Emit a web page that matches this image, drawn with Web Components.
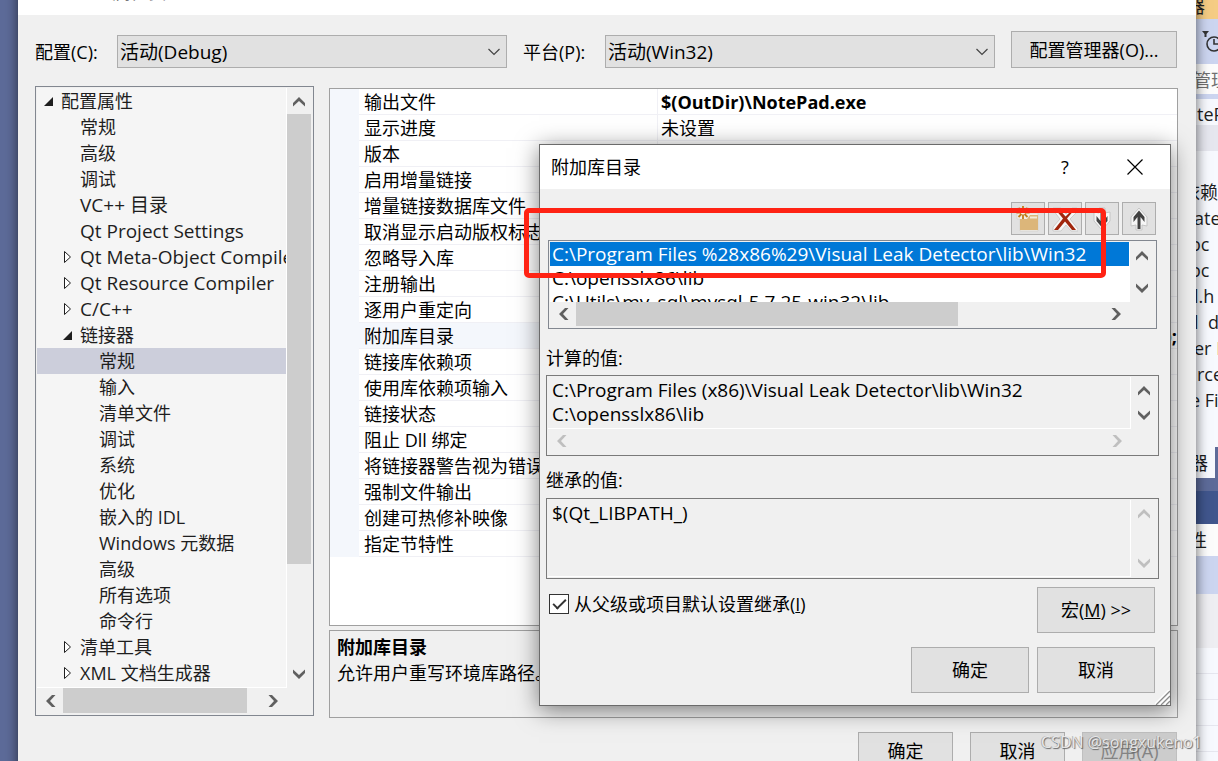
<!DOCTYPE html>
<html lang="zh-CN">
<head>
<meta charset="utf-8">
<title>NotePad 属性页</title>
<style>
html, body { margin: 0; height: 100%; }
body { overflow: hidden; background: #5d6b99; color: #000; font: 18px/26px "Open Sans", "Noto Sans CJK SC", sans-serif; }
</style>
</head>
<body>
<app-shell></app-shell>
<script>
const define = (name, html, setup) => {
  const tpl = document.createElement('template');
  tpl.innerHTML = html;
  customElements.define(name, class extends HTMLElement {
    constructor() {
      super();
      this.attachShadow({ mode: 'open' }).append(tpl.content.cloneNode(true));
    }
    connectedCallback() {
      if (setup && !this.ready) { this.ready = true; setup(this, this.shadowRoot); }
    }
  });
};

/* Bold chevron used by scroll bars; dir = up | down | left | right */
define('chevron-icon', `
<style>
:host { display: flex; width: 12px; height: 12px; flex: none; color: #606060; }
:host([dir=down]) svg { transform: rotate(180deg); }
:host([dir=left]) svg { transform: rotate(-90deg); }
:host([dir=right]) svg { transform: rotate(90deg); }
</style>
<svg width="12" height="12" viewBox="0 0 12 12"><path d="M0 8 6 2l6 6v3.500L6 6l-6 5.500z" fill="currentColor"/></svg>`);

define('scroll-bar', `
<style>
:host { display: flex; flex-direction: column; width: 24px; background: #f0f0f0; }
:host([horizontal]) { flex-direction: row; width: auto; height: 24px; }
:host([off]) chevron-icon { color: #bfbfbf; }
.end { flex: 0 0 26px; display: flex; align-items: center; justify-content: center; }
.thumb { background: #cdcdcd; }
</style>
<div class="end"><chevron-icon id="a"></chevron-icon></div>
<div class="thumb"></div><div class="rest"></div>
<div class="end"><chevron-icon id="b"></chevron-icon></div>`, (el, root) => {
  const h = el.hasAttribute('horizontal');
  root.getElementById('a').setAttribute('dir', h ? 'left' : 'up');
  root.getElementById('b').setAttribute('dir', h ? 'right' : 'down');
  root.querySelector('.thumb').style.flex = (el.getAttribute('thumb') || 0) + ' 0 0';
  root.querySelector('.rest').style.flex = (el.getAttribute('rest') || 1) + ' 0 0';
});

define('win-button', `
<style>
:host { display: block; width: 118px; height: 46px; }
:host([page]) { width: 95px; height: 37px; }
:host([wide]) { width: 166px; height: 37px; }
:host([icon]) { width: 34px; height: 33px; }
button { box-sizing: border-box; width: 100%; height: 100%; margin: 0; padding: 0; border: 1px solid #adadad; background: #e1e1e1; color: inherit; font: inherit; display: flex; align-items: center; justify-content: center; }
button:disabled { background: #ccc; border-color: #bfbfbf; color: #838383; }
span { white-space: pre; }
</style>
<button type="button"><span><slot></slot></span></button>`, (el, root) => {
  const b = root.querySelector('button');
  b.disabled = el.hasAttribute('disabled');
  if (el.title) b.setAttribute('aria-label', el.title);
});

define('combo-box', `
<style>
:host { display: grid; flex: 1 1 0; min-width: 0; height: 32px; }
select, svg { grid-area: 1 / 1; }
select { appearance: none; box-sizing: border-box; width: 100%; height: 100%; margin: 0; border: 1px solid #adadad; border-radius: 0; padding: 0 28px 0 2px; background: #e1e1e1; color: #000; font: inherit; font-size: 19px; }
svg { justify-self: end; align-self: center; margin-right: 7px; pointer-events: none; }
</style>
<select><option></option></select>
<svg width="12" height="8" viewBox="0 0 12 8"><path d="M.5 1 6 6.500 11.500 1" fill="none" stroke="#444" stroke-width="1.200"/></svg>`, (el, root) => {
  root.querySelector('option').textContent = el.getAttribute('value');
  root.querySelector('select').setAttribute('aria-label', el.getAttribute('label'));
});

define('property-tree', `
<style>
:host { display: grid; grid-template-columns: minmax(0, 1fr) 24px; box-sizing: border-box; width: 279px; flex: none; align-self: flex-start; border: 1px solid #828790; padding: 1px 2px 2px 1px; background: #f0f0f0; color: #1e1e1e; }
ul { list-style: none; margin: 0; padding: 0 0 1px; overflow: hidden; background: #f5f5f5; border: solid #fff; border-width: 0 1px 1px 0; }
li { display: flex; align-items: center; height: 26px; padding-left: 5px; white-space: nowrap; }
li[data-level="1"] { padding-left: 24px; }
li[data-level="2"] { padding-left: 43px; }
li.latin { font-size: 19px; }
li[aria-selected=true] { background: #cccedb; }
svg { flex: none; margin-right: 7px; }
scroll-bar[horizontal] { grid-column: 1; height: 25px; }
</style>
<ul role="tree" aria-label="配置属性"></ul>
<scroll-bar thumb="450" rest="98"></scroll-bar>
<scroll-bar horizontal thumb="184" rest="14"></scroll-bar>`, (el, root) => {
  const open = '<path d="M11 3v9H2z" fill="#1e1e1e"/>';
  const shut = '<path d="M3.500 1.500v11l6-5.500z" fill="#fff" stroke="#1e1e1e"/>';
  const items = [[0, '配置属性', open], [1, '常规'], [1, '高级'], [1, '调试'], [1, 'VC++ 目录', '', 1], [1, 'Qt Project Settings', '', 1],
    [1, 'Qt Meta-Object Compiler', shut, 1], [1, 'Qt Resource Compiler', shut, 1], [1, 'C/C++', shut, 1], [1, '链接器', open],
    [2, '常规'], [2, '输入'], [2, '清单文件'], [2, '调试'], [2, '系统'], [2, '优化'], [2, '嵌入的 IDL'], [2, 'Windows 元数据'],
    [2, '高级'], [2, '所有选项'], [2, '命令行'], [1, '清单工具', shut], [1, 'XML 文档生成器', shut]];
  root.querySelector('ul').innerHTML = items.map(([level, text, icon, latin], i) =>
    `<li role="treeitem" data-level="${level}" aria-selected="${i === 10}" class="${latin ? 'latin' : ''}"><svg width="12" height="14" viewBox="0 0 12 14">${icon || ''}</svg>${text}</li>`).join('');
});

define('property-grid', `
<style>
:host { display: block; border: 1px solid #a0a0a0; padding-bottom: 68px; background: #fff; overflow: hidden; }
table { border-collapse: separate; border-spacing: 0; table-layout: fixed; width: 100%; }
th, td { box-sizing: border-box; height: 26px; padding: 2px 0 0 4px; border-bottom: 1px solid #f0f0f5; font-weight: 400; text-align: left; line-height: 23px; white-space: nowrap; }
th { border-right: 1px solid #f0f0f5; padding-left: 5px; width: 299px; }
.gutter { width: 29px; padding: 0; border: 0; background: #f4f7fc; }
td { padding-left: 3px; }
.set { font-weight: 700; }
.current th { background: #f4f7fc; }
.current .set { text-align: right; }
</style>
<table><tbody></tbody></table>`, (el, root) => {
  const names = ['输出文件', '显示进度', '版本', '启用增量链接', '增量链接数据库文件', '取消显示启动版权标志', '忽略导入库', '注册输出', '逐用户重定向', '附加库目录', '链接库依赖项', '使用库依赖项输入', '链接状态', '阻止 Dll 绑定', '将链接器警告视为错误', '强制文件输出', '创建可热修补映像', '指定节特性'];
  const values = { 0: '$(OutDir)\\NotePad.exe', 1: '未设置', 9: 'b;' };
  root.querySelector('tbody').innerHTML = names.map((n, i) =>
    `<tr class="${i === 9 ? 'current' : ''}"><td class="gutter"></td><th scope="row">${n}</th><td class="${i === 1 ? '' : 'set'}">${values[i] || ''}</td></tr>`).join('');
});

define('value-box', `
<style>
:host { display: grid; grid-template-columns: minmax(0, 1fr) 26px; box-sizing: border-box; height: 81px; border: 1px solid #7a7a7a; padding: 1px; background: #f0f0f0; }
textarea { display: block; box-sizing: border-box; width: 100%; height: 100%; margin: 0; border: solid #fff; border-width: 0 1px 1px 0; outline: 0; resize: none; overflow: hidden; padding: 1px 4px 0; background: transparent; color: inherit; font: inherit; font-size: 19px; line-height: 24px; white-space: pre; }
:host([horizontal]) { grid-template-rows: 52px 1fr; }
scroll-bar { width: auto; }
scroll-bar[horizontal] { display: none; }
:host([horizontal]) scroll-bar[horizontal] { display: flex; }
</style>
<textarea readonly></textarea><scroll-bar class="v"></scroll-bar><scroll-bar horizontal off></scroll-bar>`, (el, root) => {
  const t = root.querySelector('textarea');
  t.value = el.getAttribute('value');
  t.setAttribute('aria-label', el.getAttribute('label'));
  root.querySelector('.v').toggleAttribute('off', el.hasAttribute('off'));
});

define('path-list', `
<style>
:host { display: grid; grid-template-columns: minmax(0, 1fr) 25px; grid-template-rows: 60px 24px; box-sizing: border-box; height: 89px; margin-left: 2px; margin-right: 2px; border: 1px solid #828790; padding: 1px; background: #f0f0f0; }
ul { list-style: none; margin: 0; padding: 0; background: #fff; overflow: hidden; border-right: 1px solid #fff; }
li { height: 24px; padding-left: 2px; font-size: 19px; line-height: 24px; white-space: nowrap; }
li[aria-selected=true] { background: #0078d7; color: #fff; }
</style>
<ul role="listbox" aria-label="附加库目录">
<li role="option" aria-selected="true">C:\\Program Files %28x86%29\\Visual Leak Detector\\lib\\Win32</li>
<li role="option">C:\\opensslx86\\lib</li>
<li role="option">C:\\Utils\\my_sql\\mysql-5.7.25-win32\\lib</li>
</ul>
<scroll-bar></scroll-bar>
<scroll-bar horizontal thumb="381" rest="146"></scroll-bar>`);

define('library-dialog', `
<style>
:host { display: block; border: 1px solid #6b6b6b; background: #f0f0f0; box-shadow: 0 4px 22px rgba(0,0,0,.5); }
header { display: flex; align-items: center; height: 44px; padding: 0 26px 0 11px; background: #fff; }
h2 { flex: 1; margin: 0; font: inherit; }
header button { border: 0; padding: 0; margin: 0; background: none; color: inherit; font: inherit; width: 18px; height: 26px; display: flex; align-items: center; justify-content: center; }
header button + button { margin-left: 52px; }
.body { padding: 13px 11px 12px 6px; }
.tools { display: flex; justify-content: flex-end; gap: 3px; padding: 0 3px 5px 0; }
.cap { padding: 16px 0 4px; }
.cap + value-box + .cap { padding: 11px 0 5px; }
.row { display: flex; justify-content: space-between; gap: 8px; padding: 8px 4px 0 3px; }
.row.end { justify-content: flex-end; padding-top: 14px; }
label { display: flex; align-items: center; gap: 5px; height: 34px; }
input { appearance: none; box-sizing: border-box; display: grid; place-items: start center; width: 20px; height: 20px; margin: 0; border: 1px solid #333; background: #fff; }
input:checked::before { content: ""; width: 5px; height: 11px; margin-top: 1px; border: solid #333; border-width: 0 2px 2px 0; transform: rotate(45deg); }
.grip { position: absolute; right: 0; bottom: 0; }
</style>
<header><h2>附加库目录</h2>
<button type="button" aria-label="帮助">?</button>
<button type="button" aria-label="关闭"><svg width="16" height="16" viewBox="0 0 16 16"><path d="m.5.5 15 15m0-15-15 15" stroke="#000" stroke-width="1.200"/></svg></button></header>
<div class="body">
<div class="tools">
<win-button icon title="新行"><svg width="24" height="26" viewBox="0 0 24 26" style="display:block"><path d="M1 2h12v5h9v18H4V13H1z" fill="#f3f0ea" stroke="#d0cdc6" stroke-width=".6"/><path d="M4 13h7l3-4h8v15H4z" fill="#dcb67a"/><path d="M14 11.500h7" stroke="#f3ead8" stroke-width="2"/><g stroke="#c27d1a" stroke-width="1.800"><path d="M7 0v4.500M7 8.500V13M.5 6.500H5M9 6.500h4.500M2.500 2l3 3M8.500 8l3 3M11.500 2l-3 3M5.500 8l-3 3"/></g></svg></win-button>
<win-button icon title="删除"><svg width="26" height="26" viewBox="0 0 26 26" style="display:block"><path d="M1 2h8l5 6 6-6h5v4l-7 7 8 10v2h-7l-5-6-5 6H1v-4l7-8-7-9z" fill="#f6f6f6" stroke="#c5c5c5" stroke-width=".8"/><path d="M3 3h4l6.500 7.500L21 3h2l-8 9.500L24 24h-4l-7-8.500L6 24H2l9-11.500z" fill="#a1260d"/></svg></win-button>
<win-button icon title="下移"><svg width="20" height="24" viewBox="0 0 20 24" style="display:block"><path d="M7 1h6v5l5-1v9l-8 9-8-9V5l5 1z" fill="#f6f6f6" stroke="#c5c5c5"/><path d="M8.500 2h3v12l4-5v5L10 20.500 4.500 14V9l4 5z" fill="#424242"/></svg></win-button>
<win-button icon title="上移"><svg width="20" height="24" viewBox="0 0 20 24" style="display:block"><path d="M7 23h6v-5l5 1v-9l-8-9-8 9v9l5-1z" fill="#f6f6f6" stroke="#c5c5c5"/><path d="M8.500 22h3V10l4 5v-5L10 3.500 4.500 10v5l4-5z" fill="#424242"/></svg></win-button>
</div>
<path-list></path-list>
<div class="cap">计算的值:</div>
<value-box horizontal label="计算的值" value="C:\\Program Files (x86)\\Visual Leak Detector\\lib\\Win32&#10;C:\\opensslx86\\lib"></value-box>
<div class="cap">继承的值:</div>
<value-box off label="继承的值" value="$(Qt_LIBPATH_)"></value-box>
<div class="row"><label><input type="checkbox" checked><span>从父级或项目默认设置继承(<u>I</u>)</span></label><win-button>宏(<u>M</u>) &gt;&gt;</win-button></div>
<div class="row end"><win-button>确定</win-button><win-button>取消</win-button></div>
</div>
<svg class="grip" width="15" height="15" viewBox="0 0 15 15"><path d="M0 15 15 0M5 15 15 5M10 15l5-5" stroke="#fff" stroke-width="3"/><path d="M1 15 15 1M6 15l9-9M11 15l4-4" stroke="#8a8a8a" stroke-width="1.300"/></svg>`);

define('config-window', `
<style>
:host { display: block; position: relative; z-index: 1; margin-top: -30px; background: #f0f0f0; box-shadow: 0 0 12px rgba(0,0,0,.6); }
header { height: 45px; padding: 9px 17px 0; box-sizing: border-box; background: #fff; color: #777; }
.body { padding: 16px 18px 16px 17px; }
.bar { display: flex; align-items: flex-end; height: 37px; padding-bottom: 18px; padding-right: 1px; }
.bar span { flex: 0 0 82px; line-height: 32px; white-space: nowrap; }
combo-box { margin-right: 16px; height: 33px; }
.main { display: flex; gap: 15px; }
.right { flex: 1; min-width: 0; padding-top: 2px; }
.about { box-sizing: border-box; height: 88px; margin-top: 4px; border: 1px solid #a0a0a0; padding: 3px 7px; }
.about h3, .about p { margin: 0; font-size: 18px; line-height: 26px; }
.foot { display: flex; justify-content: flex-end; gap: 17px; padding: 14px 1px 0 0; }
library-dialog { position: absolute; left: 521px; right: 25px; top: 174px; }
.mark { position: absolute; left: 506px; right: 90px; top: 238px; height: 60px; border: 5px solid #ff2314; border-radius: 5px; }
</style>
<header>NotePad 属性页</header>
<div class="body">
<div class="bar"><span>配置(C):</span><combo-box label="配置" value="活动(Debug)"></combo-box><span>平台(P):</span><combo-box label="平台" value="活动(Win32)"></combo-box><win-button wide>配置管理器(O)...</win-button></div>
<div class="main"><property-tree></property-tree>
<div class="right"><property-grid></property-grid><div class="about"><h3>附加库目录</h3><p>允许用户重写环境库路径。</p></div></div></div>
<div class="foot"><win-button page>确定</win-button><win-button page>取消</win-button><win-button page disabled>应用(A)</win-button></div>
</div>
<library-dialog></library-dialog>
<div class="mark"></div>`);

/* Strip of the IDE that stays visible beside the property window; its first 20px lie beneath that window. */
define('ide-strip', `
<style>
:host { display: block; width: 42px; margin-left: -20px; overflow: hidden; background: #f7f9fe; color: #1e1e1e; }
div { box-sizing: border-box; white-space: nowrap; height: 26px; padding-left: 14px; overflow: hidden; }
.tab { height: 19px; padding-left: 11px; background: #f5cc84; line-height: 12px; }
.tool { height: 45px; background: #ccd5f0; padding: 10px 0 0 26px; }
.find { height: 30px; background: #fcfcfc; color: #717171; padding-left: 17px; line-height: 32px; }
.edge { height: 5px; background: #ccd5f0; }
.dark { background: #e6e7ef; }
.project { line-height: 30px; }
.a { padding-left: 21px; }
.b { padding-left: 18px; }
.refs { padding-left: 6px; }
.gap { height: 28px; }
.foot-bg { height: auto; padding: 0; background: linear-gradient(#f7f9fe 34px, #5d6b99 34px); }
.foot { height: 65px; margin-right: 3px; padding: 37px 0 0 14px; background: #f7f9fe; }
.blue { height: 13px; background: #5d6b99; }
.head { height: 33px; background: #40568d; }
.prop { height: 32px; background: #fcfcfc; padding-left: 13px; line-height: 32px; }
.pick { height: 38px; background: #ccd5f0; }
.mute { height: 54px; background: #eeeef2; }
.line { border-bottom: 1px solid #e6e7ef; }
</style>
<div class="tab">器</div>
<div class="tool"><svg width="20" height="32" viewBox="0 0 20 32"><path d="M0 2h7L4.500 5v3h-2V5z" fill="#333"/><circle cx="12" cy="15" r="7" fill="none" stroke="#333" stroke-width="1.600"/><path d="M12 10v5h5" fill="none" stroke="#333" stroke-width="1.600"/></svg></div>
<div class="find">管理</div><div class="edge"></div>
<div class="a project">tePad</div><div class="dark"></div><div class="gap"></div>
<div class="refs">依赖项</div><div class="b">ate</div><div>oc</div><div>oc</div><div class="b">l.h</div><div class="b">l &nbsp;d</div><div class="b">er Files</div><div class="a">rce Files</div><div>e Files</div>
<div class="foot-bg"><div class="foot">器</div></div>
<div class="blue"></div><div class="head"></div><div class="prop">性</div><div class="pick"></div><div class="mute"></div>
<div class="line"></div><div class="line"></div><div class="line"></div><div class="line"></div><div class="line"></div>`);

define('app-shell', `
<style>
:host { display: grid; grid-template-columns: 18px minmax(0, 1fr) 22px; position: relative; height: 100vh; overflow: hidden; }
ide-strip { width: 42px; }
.sign { position: absolute; right: 16px; bottom: 7px; z-index: 2; font-size: 16px; line-height: 24px; color: rgba(245,245,245,.85); text-shadow: 1px 1px 1px #666, -1px 0 0 rgba(130,130,130,.5); }
</style>
<div></div><config-window></config-window><ide-strip></ide-strip>
<div class="sign">CSDN @songxukeno1</div>`);
</script>
</body>
</html>
